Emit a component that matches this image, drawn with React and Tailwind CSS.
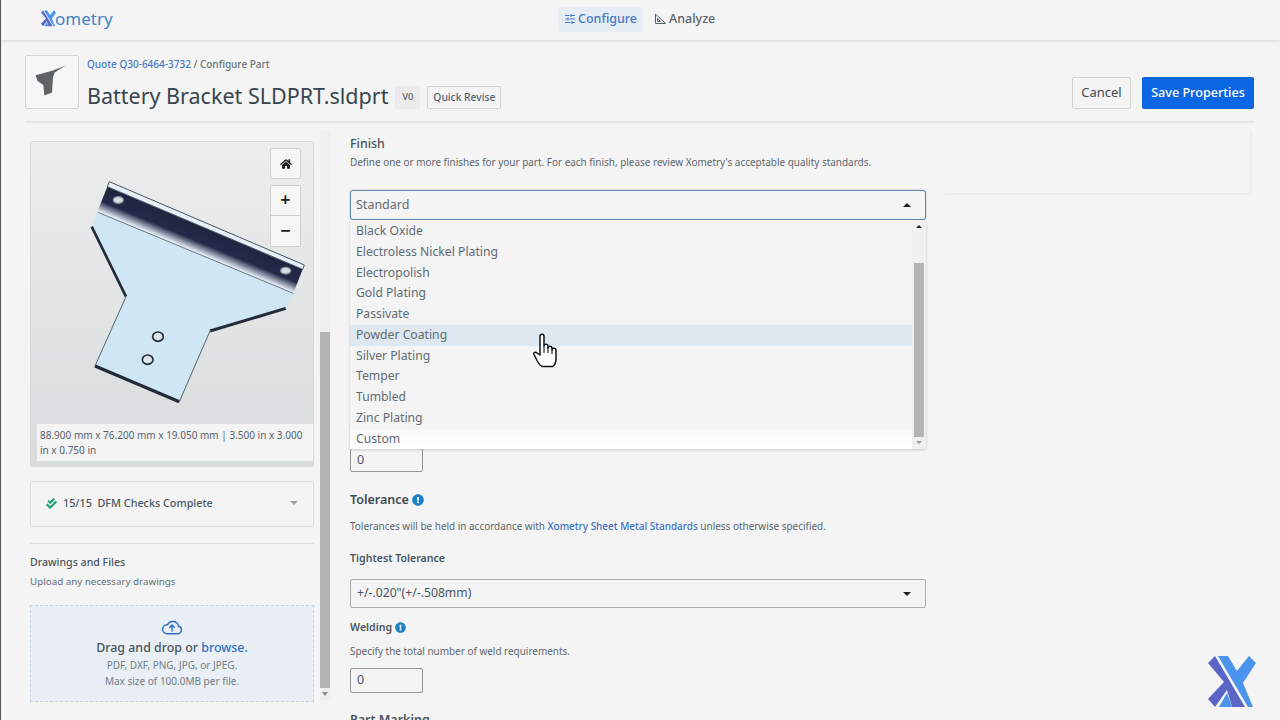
import React from "react";
import { FaHome, FaCheckDouble, FaExclamationCircle } from "react-icons/fa";
import { SlidersHorizontal } from "lucide-react";

const finishes = [
  "Black Oxide",
  "Electroless Nickel Plating",
  "Electropolish",
  "Gold Plating",
  "Passivate",
  "Powder Coating",
  "Silver Plating",
  "Temper",
  "Tumbled",
  "Zinc Plating",
];

function XMark({ className }) {
  return (
    <svg viewBox="0 0 48 52" className={className}>
      <polygon points="0,7 7,0 37,51 24,51 19,34 7,51 0,43 16,26" fill="#5a66c6" />
      <polygon points="10,0 20,0 29,15 41,0 48,7 35,27 45,51 40,51" fill="#4a94ee" />
      <polygon points="11,51 19,37 24,51" fill="#4a94ee" />
      <line x1="27" y1="13" x2="38" y2="0" stroke="#ffffff" strokeWidth="1" />
    </svg>
  );
}

function Bracket() {
  return (
    <svg viewBox="30 33 852 978" className="absolute -inset-[1px] h-[326px] w-[284px]">
      <defs>
        <linearGradient id="bend" gradientUnits="userSpaceOnUse" x1="262" y1="170" x2="232" y2="242">
          <stop offset="0" stopColor="#1f2540" />
          <stop offset="0.6" stopColor="#232a48" />
          <stop offset="1" stopColor="#e4edf6" />
        </linearGradient>
      </defs>
      <polygon points="215,290 232,245 820,490 797,535 570,603 478,815 225,708 318,500" fill="#cfe6f4" />
      <polygon points="262,170 848,418 820,490 232,245" fill="url(#bend)" />
      <polygon points="268,155 853,405 848,418 262,170" fill="#e6f0f6" stroke="#4a5260" strokeWidth="3" />
      <line x1="234" y1="247" x2="820" y2="490" stroke="#6b7480" strokeWidth="3" />
      <polyline points="215,290 318,500" fill="none" stroke="#232a3a" strokeWidth="8" />
      <polyline points="225,708 478,815" fill="none" stroke="#232a3a" strokeWidth="10" />
      <polyline points="570,603 797,535" fill="none" stroke="#232a3a" strokeWidth="9" />
      <polyline points="318,500 225,708" fill="none" stroke="#59636e" strokeWidth="3" />
      <polyline points="478,815 570,603" fill="none" stroke="#59636e" strokeWidth="3" />
      <ellipse cx="295" cy="210" rx="15" ry="10" fill="#d7dde2" stroke="#8791a0" strokeWidth="4" />
      <ellipse cx="797" cy="422" rx="15" ry="10" fill="#d7dde2" stroke="#8791a0" strokeWidth="4" />
      <ellipse cx="414" cy="620" rx="16" ry="14" fill="#dfe6e6" stroke="#232a3a" strokeWidth="5" />
      <ellipse cx="383" cy="689" rx="16" ry="14" fill="#dfe6e6" stroke="#232a3a" strokeWidth="5" />
    </svg>
  );
}

function HandCursor() {
  return (
    <svg viewBox="0 0 24 35" className="absolute left-[183px] top-[113px] h-[35px] w-[24px]">
      <path
        d="M7 22V3.200a2 2 0 0 1 4 0V13a2 2 0 0 1 4 .3V15a2 2 0 0 1 4 .3V17a2 2 0 0 1 4 .4V26c0 4-2 7-3.500 7.500H9.500C7.500 33.500 6 31 4 27.500L1 21.500c-.8-1.800 1.600-3.200 3-1.500z"
        fill="#ffffff"
        stroke="#111111"
        strokeWidth="1.5"
        strokeLinejoin="round"
      />
      <path d="M11 13v7M15 14v6M19 16v5" stroke="#111111" strokeWidth="1.1" fill="none" />
    </svg>
  );
}

function InputBox({ className }) {
  return (
    <div className={"flex w-[73px] items-center rounded-[2px] border border-[#8f979d] bg-[#f4f4f4] pl-[6px] text-[12.5px] text-[#4b5563] " + className}>
      0
    </div>
  );
}

export default function App() {
  return (
    <div className="h-[720px] w-[1280px] overflow-hidden bg-[#f4f4f4] font-['Noto_Sans',sans-serif] text-[#3d4a52] shadow-[inset_1px_0_0_#555]">
      {/* top nav */}
      <header className="flex h-10 items-center shadow-[0_1px_3px_rgba(0,0,0,0.12)]">
        <div className="flex w-[558px] items-center pl-[41px]">
          <XMark className="-mt-[3px] h-[17px] w-[15px]" />
          <span className="-ml-[1px] -mt-[3px] text-[17px] leading-none text-[#3f84c9]">ometry</span>
        </div>
        <nav className="-mt-[2px] flex items-center text-[12.5px]">
          <a className="flex h-[25px] w-[85px] items-center justify-center gap-[2px] rounded-[2px] bg-[#e7edf4] font-medium text-[#4279cb]">
            <SlidersHorizontal className="h-[12px] w-[12px]" strokeWidth={2.2} />
            Configure
          </a>
          <a className="ml-[11px] flex items-center gap-[3px] font-medium text-[#5a636b]">
            <svg viewBox="0 0 12 12" className="h-[12px] w-[12px]" fill="none" stroke="#5a636b" strokeWidth="1">
              <path d="M1.500 1v9.500H11.500z" />
              <path d="M3.500 5.500v3h3z" />
            </svg>
            Analyze
          </a>
        </nav>
      </header>

      {/* part header */}
      <div className="mx-[25px] mt-[15px] flex border-b-2 border-[#e4e4e4] pb-[10px]">
        <div className="h-[54px] w-[54px] rounded-[2px] border border-[#d4d4d4] bg-[#f6f6f6]">
          <svg viewBox="0 0 54 54" className="h-full w-full">
            <polygon points="10,20 28,15 41,10 30,17 28,22 27,38 19,41 18,30 12,26" fill="#5f6366" />
          </svg>
        </div>
        <div className="ml-[8px] flex-1">
          <div className="text-[10px] font-medium leading-[18px] text-[#6a737b]">
            <a className="text-[#4a78c8]">Quote Q30-6464-3732</a> / Configure Part
          </div>
          <div className="mt-[8px] flex items-center">
            <h1 className="text-[21.5px] leading-[30px] text-[#37454e]">Battery Bracket SLDPRT.sldprt</h1>
            <span className="ml-[7px] mt-[3px] flex h-[23px] w-[25px] items-center justify-center rounded-[2px] bg-[#ebebeb] text-[9.5px] font-medium text-[#56616a]">
              V0
            </span>
            <button className="ml-[7px] mt-[3px] h-[23px] w-[74px] rounded-[2px] border border-[#d4d4d4] text-[10.3px] font-medium text-[#56616a]">
              Quick Revise
            </button>
          </div>
        </div>
        <div className="mr-[1px] mt-[22px] flex h-[32px] items-center">
          <button className="h-[32px] w-[59px] rounded-[2px] border border-[#d2d2d2] text-[13px] text-[#3d4a52]">Cancel</button>
          <button className="ml-[11px] h-[32px] w-[112px] rounded-[2px] bg-[#0b66e4] text-[12.6px] font-medium text-white">
            Save Properties
          </button>
        </div>
      </div>

      <div className="flex">
        {/* left column */}
        <aside className="ml-[30px] mt-[18px] w-[284px]">
          <div className="relative h-[326px] rounded-[2px] border border-[#d8dada] bg-gradient-to-b from-[#eceeee] to-[#d9dcdc]">
            <Bracket />
            <div className="absolute left-[239px] top-[6px] flex h-[31px] w-[31px] items-center justify-center rounded-[2px] border border-[#cfcfcf] bg-[#f6f6f6]">
              <FaHome className="h-[12px] w-[12px] text-[#222]" />
            </div>
            <div className="absolute left-[239px] top-[43px] flex w-[31px] flex-col divide-y divide-[#cfcfcf] rounded-[2px] border border-[#cfcfcf] bg-[#f6f6f6] text-[#222]">
              <span className="flex h-[30px] items-center justify-center pb-[4px] text-[18px] font-semibold leading-none">+</span>
              <span className="flex h-[30px] items-center justify-center pb-[2px] text-[18px] font-semibold leading-none">−</span>
            </div>
            <div className="absolute bottom-[5px] left-[6px] right-0 h-[37px] bg-[#f4f4f4] px-[3px] py-[4px] text-[10px] leading-[15px] text-[#56616a]">
              88.900 mm x 76.200 mm x 19.050 mm | 3.500 in x 3.000 in x 0.750 in
            </div>
          </div>

          <div className="mt-[14px] flex h-[46px] items-center rounded-[2px] border border-[#dcdcdc] pb-[2px] pl-[15px] pr-[15px] text-[10.8px] font-medium text-[#4b5760]">
            <FaCheckDouble className="mr-[6px] h-[11px] w-[11px] text-[#1fa37a]" />
            <span>15/15&nbsp; DFM Checks Complete</span>
            <span className="ml-auto h-0 w-0 border-x-[4px] border-t-[4px] border-x-transparent border-t-[#9aa0a5]" />
          </div>

          <div className="mt-[16px] border-t border-[#dedede] pt-[10px]">
            <h3 className="text-[10.6px] font-medium leading-[16px] text-[#49545c]">Drawings and Files</h3>
            <p className="mt-[4px] text-[9.8px] leading-[16px] text-[#667079]">Upload any necessary drawings</p>
          </div>

          <div className="mt-[15px] flex h-[97px] flex-col items-center border border-dashed border-[#c6d3e0] bg-[#e9eff5] pt-[13px] text-center">
            <svg viewBox="0 0 24 18" className="h-[16px] w-[24px]" fill="none" stroke="#2f6fc4" strokeWidth="1.6">
              <path d="M6 16.500h12.500a4.200 4.200 0 0 0 .8-8.300A6.500 6.500 0 0 0 7 6.500 5 5 0 0 0 6 16.500z" strokeLinejoin="round" />
              <path d="M12 13.500V7M9.200 9.500 12 6.800l2.800 2.700" strokeLinecap="round" />
            </svg>
            <p className="mt-[4px] text-[12.4px] font-medium leading-[18px] text-[#49545c]">
              Drag and drop or <a className="text-[#2f6fc4]">browse.</a>
            </p>
            <p className="mt-[1px] text-[10px] leading-[15.5px] text-[#737d86]">
              PDF, DXF, PNG, JPG, or JPEG.
              <br />
              Max size of 100.0MB per file.
            </p>
          </div>
        </aside>

        {/* left scrollbar */}
        <div className="ml-[6px] mt-[7px] flex h-[570px] w-[11px] flex-col bg-[#efefef]">
          <div className="h-[202px]" />
          <div className="h-[356px] w-[10px] bg-[#b3b5b5]" />
          <div className="mt-[4px] ml-[2px] h-0 w-0 border-x-[3px] border-t-[4px] border-x-transparent border-t-[#8a8a8a]" />
        </div>

        {/* form */}
        <main className="ml-[19px] w-[576px] pt-[12px]">
          <h3 className="text-[12.4px] font-medium leading-[18px] text-[#49545c]">Finish</h3>
          <p className="mt-[1px] text-[9.95px] leading-[17px] text-[#5c666e]">
            Define one or more finishes for your part. For each finish, please review Xometry's acceptable quality standards.
          </p>

          <div className="relative mt-[19px]">
            <div className="flex h-[30px] items-center rounded-[3px] border border-[#5b86ad] bg-[#f4f4f4] pl-[5px] pr-[14px] text-[12.5px] text-[#616b73] shadow-[0_0_2px_rgba(60,110,170,0.4)]">
              Standard
              <span className="ml-auto h-0 w-0 border-x-[4px] border-b-[4px] border-x-transparent border-b-[#222]" />
            </div>
            <div className="absolute left-0 right-0 top-[30px] z-10 flex h-[229px] rounded-b-[3px] bg-[#f4f4f4] shadow-[0_1px_3px_rgba(0,0,0,0.18)]">
              <ul className="flex-1 pt-[1px] text-[12.2px] text-[#616b73]">
                {finishes.map((name) => (
                  <li
                    key={name}
                    className={
                      "flex h-[20.75px] items-center pl-[6px] " + (name === "Powder Coating" ? "bg-[#dfe8f0]" : "")
                    }
                  >
                    {name}
                  </li>
                ))}
                <li className="flex h-[20.5px] items-center bg-gradient-to-b from-[#f8f8f8] to-white pl-[6px]">Custom</li>
              </ul>
              <div className="flex w-[14px] flex-col items-center bg-[#f0f0f0]">
                <span className="mt-[5px] h-0 w-0 border-x-[3px] border-b-[3px] border-x-transparent border-b-[#222]" />
                <div className="mt-[35px] h-[174px] w-[10px] bg-[#b3b5b5]" />
                <span className="mt-[4px] h-0 w-0 border-x-[3px] border-t-[3px] border-x-transparent border-t-[#999]" />
              </div>
              <HandCursor />
            </div>
          </div>

          <InputBox className="mt-[228px] h-[24px]" />

          <h3 className="mt-[19px] flex items-center gap-[3px] text-[12.5px] font-semibold leading-[18px] text-[#3d4a52]">
            Tolerance <FaExclamationCircle className="h-[12px] w-[12px] text-[#1b82c4]" />
          </h3>
          <p className="mt-[9px] text-[9.95px] leading-[17px] text-[#5c666e]">
            Tolerances will be held in accordance with{" "}
            <a className="font-medium text-[#3f70c2]">Xometry Sheet Metal Standards</a> unless otherwise specified.
          </p>
          <h4 className="mt-[15px] text-[10.6px] font-semibold leading-[17px] text-[#49545c]">Tightest Tolerance</h4>
          <div className="mt-[12px] flex h-[29px] items-center rounded-[2px] border border-[#a8adb0] pl-[6px] pr-[14px] text-[12.2px] text-[#4b5560]">
            +/-.020"(+/-.508mm)
            <span className="ml-auto h-0 w-0 border-x-[4px] border-t-[4px] border-x-transparent border-t-[#222]" />
          </div>
          <h4 className="mt-[11px] flex items-center gap-[3px] text-[10.6px] font-semibold leading-[17px] text-[#49545c]">
            Welding <FaExclamationCircle className="h-[11px] w-[11px] text-[#1b82c4]" />
          </h4>
          <p className="mt-[7px] text-[9.95px] leading-[17px] text-[#5c666e]">Specify the total number of weld requirements.</p>
          <InputBox className="mt-[8px] h-[25px]" />
          <h4 className="mt-[18px] text-[12.5px] font-semibold leading-[17px] text-[#49545c]">Part Marking</h4>
        </main>

        {/* empty side card */}
        <div className="ml-[17px] mt-[8px] h-[62px] w-[307px] bg-[#f4f4f4] shadow-[1px_1px_3px_rgba(0,0,0,0.06)]" />
      </div>

      <XMark className="absolute left-[1208px] top-[656px] h-[52px] w-[48px]" />
    </div>
  );
}
